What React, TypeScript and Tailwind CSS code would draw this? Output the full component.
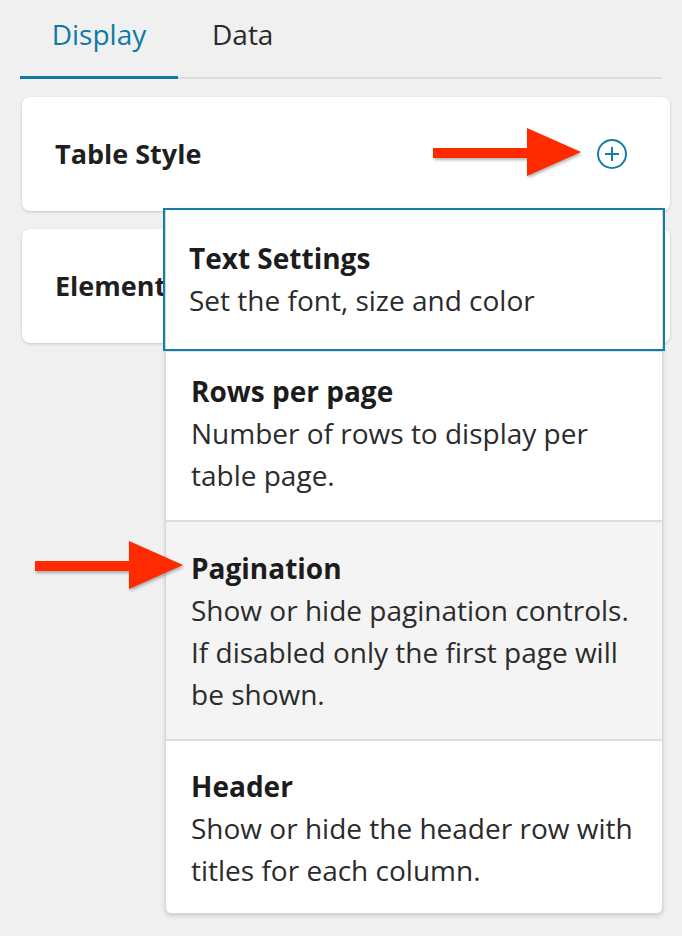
import React from 'react';

const BLUE = 'text-[#0e7aa6]';

const items = [
  { title: 'Text Settings', desc: ['Set the font, size and color'], pad: 'pt-[28px] pb-[29px]', active: true },
  { title: 'Rows per page', desc: ['Number of rows to display per', 'table page.'], pad: 'pt-[18px] pb-[24px]' },
  { title: 'Pagination', desc: ['Show or hide pagination controls.', 'If disabled only the first page will', 'be shown.'], pad: 'pt-[25px] pb-[24px]', hover: true },
  { title: 'Header', desc: ['Show or hide the header row with', 'titles for each column.'], pad: 'pt-[24px] pb-[22px]' },
];

function RedArrow({ className }: { className: string }) {
  return (
    <svg className={className} width="152" height="54" viewBox="0 0 152 54" style={{ filter: 'drop-shadow(1px 2px 1.5px rgba(0,0,0,0.3))' }}>
      <rect x="2" y="22" width="96" height="10" fill="#ff2a00" />
      <polygon points="96,2 150,26 96,50" fill="#ff2a00" />
    </svg>
  );
}

function PlusCircle() {
  return (
    <svg width="32" height="32" viewBox="0 0 32 32" fill="none" stroke="#137ca7" strokeWidth="2">
      <circle cx="16" cy="16" r="14" />
      <path d="M16 9v14M9 16h14" />
    </svg>
  );
}

export default function App() {
  return (
    <div className="relative w-[682px] h-[936px] bg-[#f0f0f0] overflow-hidden" style={{ fontFamily: '"Open Sans", "Noto Sans", sans-serif' }}>
      {/* tabs */}
      <div className="mx-[20px] flex border-b-2 border-[#dcdcdc] h-[79px]">
        <div className={`w-[158px] flex justify-center pt-[13px] text-[28px] leading-[42px] ${BLUE} border-b-[3px] border-[#0e7aa6] -mb-[2px]`}>Display</div>
        <div className="px-[34px] pt-[13px] text-[28px] leading-[42px] text-[#2a2a2a]">Data</div>
      </div>

      {/* cards */}
      <div className="mx-[22px] mt-[18px] flex flex-col gap-[18px] w-[648px]">
        <div className="h-[114px] bg-white rounded-[8px] shadow-[0_1px_3px_rgba(0,0,0,0.18)] flex items-center justify-between pl-[33px] pr-[42px]">
          <span className="text-[27px] font-bold text-[#1f1f1f]">Table Style</span>
          <PlusCircle />
        </div>
        <div className="h-[114px] bg-white rounded-[8px] shadow-[0_1px_3px_rgba(0,0,0,0.18)] flex items-center pl-[33px]">
          <span className="text-[27px] font-bold text-[#1f1f1f]">Elements</span>
        </div>
      </div>

      {/* dropdown menu */}
      <div className="absolute left-[165px] top-[208px] w-[498px] bg-white rounded-b-[6px] border border-[#d6d6d6] shadow-[0_2px_4px_rgba(0,0,0,0.15)] text-[#222]">
        {items.map((it, i) => (
          <div
            key={it.title}
            className={`${it.pad} pl-[25px] pr-[8px] ${i > 0 ? 'border-t-2 border-[#dedede]' : ''} ${it.hover ? 'bg-[#f4f4f4]' : ''} ${it.active ? 'outline-2 outline-[#137ca7] -outline-offset-1 mx-[-2px] px-[27px]' : ''}`}
          >
            <div className="text-[28px] leading-[42px] font-bold text-[#1c1c1c] whitespace-nowrap">{it.title}</div>
            {it.desc.map(d => (
              <div key={d} className="text-[28px] leading-[42px] text-[#2b2b2b] whitespace-nowrap">{d}</div>
            ))}
          </div>
        ))}
      </div>

      <RedArrow className="absolute left-[431px] top-[126px]" />
      <RedArrow className="absolute left-[33px] top-[539px]" />
    </div>
  );
}
